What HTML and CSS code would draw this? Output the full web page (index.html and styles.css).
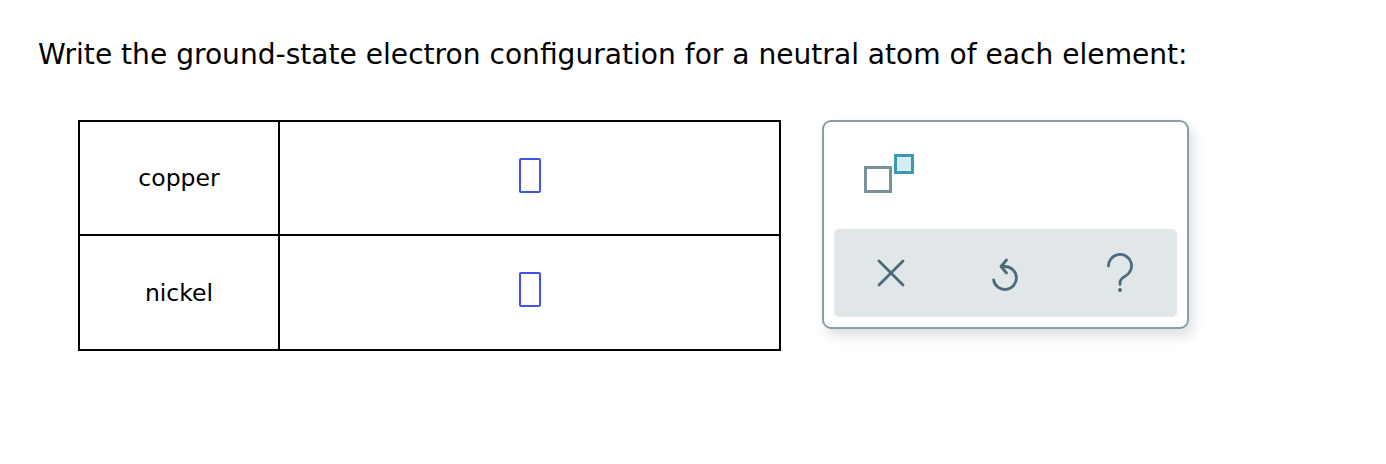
FILE: index.html
```html
<!DOCTYPE html>
<html>
<head>
<meta charset="utf-8">
<link rel="stylesheet" href="styles.css">
</head>
<body>
<div class="page">
  <p class="prompt">Write the ground-state electron configuration for a neutral atom of each element:</p>
  <div class="work">
    <table class="answers">
      <tr>
        <td class="name">copper</td>
        <td class="slot"><span class="box"></span></td>
      </tr>
      <tr>
        <td class="name">nickel</td>
        <td class="slot"><span class="box"></span></td>
      </tr>
    </table>
    <div class="palette">
      <div class="tools">
        <svg class="sup" width="54" height="43" viewBox="0 0 54 43">
          <rect x="3.5" y="15.5" width="25" height="24" fill="#fff" stroke="#7b9199" stroke-width="3"/>
          <rect x="33.5" y="3.5" width="17" height="17" fill="#d4eef4" stroke="#3f98b0" stroke-width="3"/>
        </svg>
      </div>
      <div class="actions">
        <button class="act" aria-label="clear">
          <svg width="28" height="28" viewBox="0 0 28 28"><path d="M2 2 L26 26 M26 2 L2 26" stroke="#4b6b78" stroke-width="2.8" stroke-linecap="round" fill="none"/></svg>
        </button>
        <button class="act" aria-label="undo">
          <svg width="30" height="38" viewBox="0 0 30 38"><path d="M11.5 12.5 H15 A11.5 11.5 0 1 1 3.6 26" stroke="#4b6b78" stroke-width="2.8" stroke-linecap="round" stroke-linejoin="round" fill="none"/><path d="M16.5 6 L11 12.5 L16.5 19" stroke="#4b6b78" stroke-width="2.8" stroke-linecap="round" stroke-linejoin="round" fill="none"/></svg>
        </button>
        <button class="act" aria-label="help">
          <svg width="28" height="40" viewBox="0 0 28 40"><path d="M2.5 13 A11.5 11.5 0 1 1 19.5 23 C15.5 25 14 27 14 30 V31.5" stroke="#4b6b78" stroke-width="2.8" stroke-linecap="round" fill="none"/><circle cx="14" cy="37" r="2" fill="#4b6b78"/></svg>
        </button>
      </div>
    </div>
  </div>
</div>
</body>
</html>
```
FILE: styles.css
```css
html, body {
  margin: 0;
  padding: 0;
  background: #fff;
}
.page {
  padding: 37px 0 0 38px;
  font-family: "DejaVu Sans", Verdana, sans-serif;
  color: #000;
}
.prompt {
  margin: 0;
  font-size: 28.1px;
  line-height: 36px;
}
.work {
  display: flex;
  align-items: flex-start;
  gap: 41px;
  margin-top: 47px;
  margin-left: 40px;
}
.answers {
  border-collapse: collapse;
  width: 703px;
}
.answers td {
  border: 2px solid #000;
  height: 112px;
  padding: 0;
  text-align: center;
  vertical-align: middle;
}
.answers tr + tr td {
  height: 113px;
}
.answers td.name {
  width: 198px;
  font-size: 23.5px;
}
.answers td.slot {
  line-height: 0;
}
.box {
  display: inline-block;
  width: 18px;
  height: 31px;
  border: 2px solid #3d55f0;
  border-radius: 2px;
  margin-top: -6px;
}
.palette {
  width: 363px;
  height: 205px;
  border: 2px solid #8a9da6;
  border-radius: 9px;
  box-shadow: 4px 7px 12px rgba(80, 100, 110, 0.2);
  display: flex;
  flex-direction: column;
}
.tools {
  flex: 1;
  padding: 30px 0 0 38px;
}
.sup {
  display: block;
}
.actions {
  margin: 0 10px 10px 10px;
  height: 88px;
  background: #e1e6e9;
  border-radius: 5px;
  display: grid;
  grid-template-columns: repeat(3, 1fr);
  align-items: center;
  justify-items: center;
}
.act {
  background: none;
  border: 0;
  padding: 0;
  display: flex;
  align-items: center;
  justify-content: center;
  cursor: pointer;
}
.act svg {
  display: block;
}
```
